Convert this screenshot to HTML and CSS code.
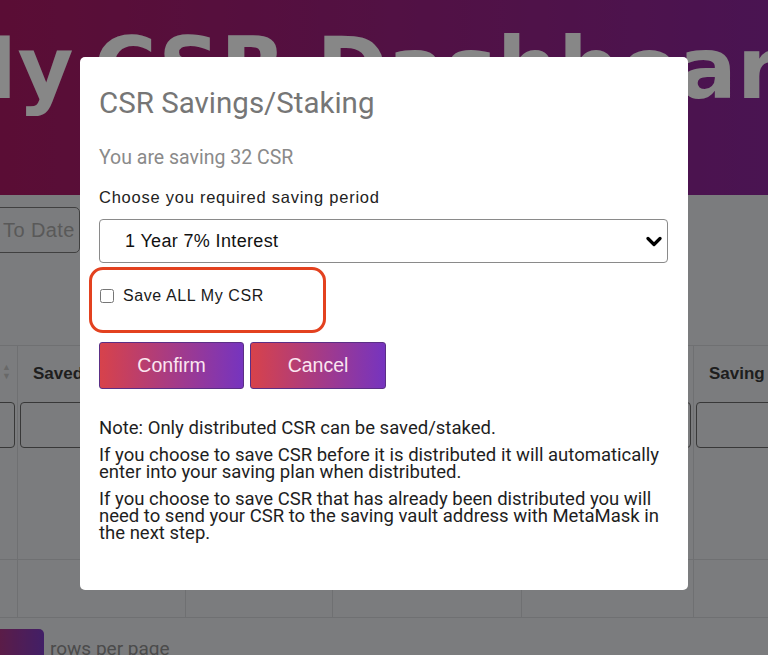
FILE: index.html
```html
<!DOCTYPE html>
<html lang="en">
<head>
    <meta charset="UTF-8">
    <meta name="viewport" content="width=device-width, initial-scale=1.0">
    <title>My CSR Dashboard</title>
    <link rel="stylesheet" href="styles.css">
</head>
<body>
    <div class="page">
        <header class="hero">
            <h1><span class="hero-lead">My</span> CSR Dashboard</h1>
        </header>
        <div class="filters">
            <input type="text" class="date-input" placeholder="To Date">
        </div>
        <table class="grid">
            <colgroup>
                <col style="width: 60px">
                <col style="width: 168px">
                <col style="width: 147px">
                <col style="width: 189px">
                <col style="width: 172px">
                <col style="width: 120px">
            </colgroup>
            <tr class="head-row">
                <th><span class="sort">&#9650;<br>&#9660;</span></th>
                <th>Saved</th>
                <th>Released</th>
                <th>Amount</th>
                <th>Interest</th>
                <th>Saving</th>
            </tr>
            <tr class="filter-row">
                <td><input type="text" class="cell-input"></td>
                <td><input type="text" class="cell-input"></td>
                <td><input type="text" class="cell-input"></td>
                <td><input type="text" class="cell-input"></td>
                <td><input type="text" class="cell-input"></td>
                <td><input type="text" class="cell-input"></td>
            </tr>
            <tr class="data-row">
                <td></td><td></td><td></td><td></td><td></td><td></td>
            </tr>
            <tr class="empty-row">
                <td></td><td></td><td></td><td></td><td></td><td></td>
            </tr>
        </table>
        <div class="pager">
            <button class="page-size"></button>
            <span class="pager-label">rows per page</span>
        </div>
    </div>

    <div class="backdrop">
        <div class="modal">
            <h2 class="modal-title">CSR Savings/Staking</h2>
            <p class="modal-amount">You are saving 32 CSR</p>
            <label class="field-label" for="period">Choose you required saving period</label>
            <div class="select-wrap">
                <select id="period" class="period-select">
                    <option>1 Year 7% Interest</option>
                    <option>2 Years 9% Interest</option>
                    <option>3 Years 12% Interest</option>
                </select>
                <svg class="chevron" width="16" height="11" viewBox="0 0 16 11">
                    <path d="M2 2.5 L8 8.5 L14 2.5" fill="none" stroke="#000" stroke-width="3.2" stroke-linecap="round" stroke-linejoin="round"/>
                </svg>
            </div>
            <label class="check-row">
                <input type="checkbox" id="saveAll">
                <span>Save ALL My CSR</span>
            </label>
            <div class="actions">
                <button class="grad-btn confirm-btn">Confirm</button>
                <button class="grad-btn cancel-btn">Cancel</button>
            </div>
            <div class="notes">
                <p>Note: Only distributed CSR can be saved/staked.</p>
                <p>If you choose to save CSR before it is distributed it will automatically enter into your saving plan when distributed.</p>
                <p>If you choose to save CSR that has already been distributed you will need to send your CSR to the saving vault address with MetaMask in the next step.</p>
            </div>
            <div class="highlight"></div>
        </div>
    </div>
</body>
</html>
```

FILE: styles.css
```css
body {
    margin: 0;
    width: 768px;
    height: 655px;
    overflow: hidden;
    background: #e9ebee;
    font-family: 'Roboto', 'Liberation Sans', sans-serif;
}
.page {
    width: 768px;
}
.hero {
    height: 195px;
    background: linear-gradient(to right, #ab1a64, #8c269b);
    overflow: hidden;
}
.hero h1 {
    margin: 0 0 0 -68px;
    padding-top: 24px;
    font-family: 'DejaVu Sans', sans-serif;
    font-size: 86px;
    line-height: 88px;
    font-weight: bold;
    color: #ffffff;
    white-space: nowrap;
}
.hero-lead {
    margin-right: -10px;
}
.filters {
    height: 150px;
    padding-top: 12px;
    box-sizing: border-box;
}
.date-input {
    margin-left: -60px;
    width: 140px;
    height: 46px;
    box-sizing: border-box;
    padding: 0 0 0 62px;
    border: 1px solid #7a7a7a;
    border-radius: 5px;
    background: transparent;
    font-family: 'Liberation Sans', sans-serif;
    font-size: 20px;
    letter-spacing: 0.4px;
}
.date-input::placeholder {
    color: #a9a9a9;
}
.grid {
    margin-left: -43px;
    border-collapse: collapse;
    table-layout: fixed;
    width: 856px;
}
.grid th, .grid td {
    border-left: 1px solid #d2d4d8;
    border-right: 1px solid #d2d4d8;
    padding: 0;
}
.head-row th {
    height: 55px;
    border-top: 1px solid #d2d4d8;
    text-align: left;
    padding-left: 15px;
    font-family: 'Liberation Sans', sans-serif;
    font-size: 17px;
    font-weight: bold;
    color: #3a3a3a;
}
.sort {
    display: inline-block;
    margin-left: 29px;
    font-size: 9px;
    line-height: 9px;
    color: #c4c4c4;
}
.filter-row td {
    height: 48px;
    padding: 0 2px;
}
.cell-input {
    display: block;
    width: 100%;
    height: 46px;
    box-sizing: border-box;
    border: 1px solid #6a6a6a;
    border-radius: 4px;
    background: transparent;
}
.data-row td {
    height: 110px;
    border-bottom: 1px solid #d2d4d8;
}
.empty-row td {
    height: 57px;
    border-bottom: 1px solid #d2d4d8;
}
.pager {
    display: flex;
    align-items: flex-start;
    gap: 6px;
    margin-top: 11px;
    margin-left: -20px;
}
.page-size {
    flex: none;
    width: 64px;
    height: 44px;
    border: none;
    border-radius: 5px;
    background: linear-gradient(to right, #c2346e, #7c3bc2);
}
.pager-label {
    padding-top: 9px;
    font-size: 19px;
    line-height: 22px;
    color: #8e8e8e;
}

/* modal */
.backdrop {
    position: fixed;
    top: 0;
    left: 0;
    right: 0;
    bottom: 0;
    background: rgba(0, 0, 0, 0.47);
}
.modal {
    position: relative;
    width: 608px;
    height: 533px;
    box-sizing: border-box;
    margin: 57px auto 0;
    padding: 29px 19px 0;
    background: #ffffff;
    border-radius: 5px;
}
.modal-title {
    margin: 0;
    font-size: 29.5px;
    line-height: 34px;
    font-weight: 400;
    color: #767676;
}
.modal-amount {
    margin: 27px 0 0;
    font-size: 19.5px;
    line-height: 22px;
    color: #8a8a8a;
}
.field-label {
    display: block;
    margin-top: 18px;
    font-family: 'Liberation Sans', sans-serif;
    font-size: 16.5px;
    letter-spacing: 0.75px;
    line-height: 20px;
    color: #222222;
}
.select-wrap {
    position: relative;
    margin-top: 12px;
    width: 569px;
}
.period-select {
    display: block;
    width: 100%;
    height: 44px;
    padding: 0 0 0 25px;
    -webkit-appearance: none;
    appearance: none;
    border: 1px solid #8a8a8a;
    border-radius: 4px;
    background: #ffffff;
    font-family: 'Liberation Sans', sans-serif;
    font-size: 18px;
    letter-spacing: 0.35px;
    color: #111111;
}
.chevron {
    position: absolute;
    right: 6px;
    top: 17px;
}
.check-row {
    display: flex;
    align-items: center;
    gap: 9px;
    margin-top: 23px;
    height: 20px;
    font-family: 'Liberation Sans', sans-serif;
    font-size: 16px;
    letter-spacing: 0.6px;
    color: #1a1a1a;
}
.check-row input {
    margin: 0 0 0 1px;
    width: 14px;
    height: 14px;
}
.actions {
    display: flex;
    gap: 6px;
    margin-top: 36px;
}
.grad-btn {
    height: 47px;
    border: 1px solid #5b2f85;
    border-radius: 3px;
    background: linear-gradient(to right, #d7424b, #7634bf);
    color: #fbe6f0;
    font-family: 'Liberation Sans', sans-serif;
    font-size: 19.5px;
    cursor: pointer;
}
.confirm-btn {
    width: 145px;
}
.cancel-btn {
    width: 136px;
}
.notes {
    margin-top: 31px;
    font-size: 18.5px;
    line-height: 17px;
    color: #1e1e1e;
}
.notes p {
    margin: 0 0 10px;
}
.highlight {
    position: absolute;
    left: 9px;
    top: 210px;
    width: 237px;
    height: 66px;
    box-sizing: border-box;
    border: 3px solid #e3411f;
    border-radius: 14px;
}
```
